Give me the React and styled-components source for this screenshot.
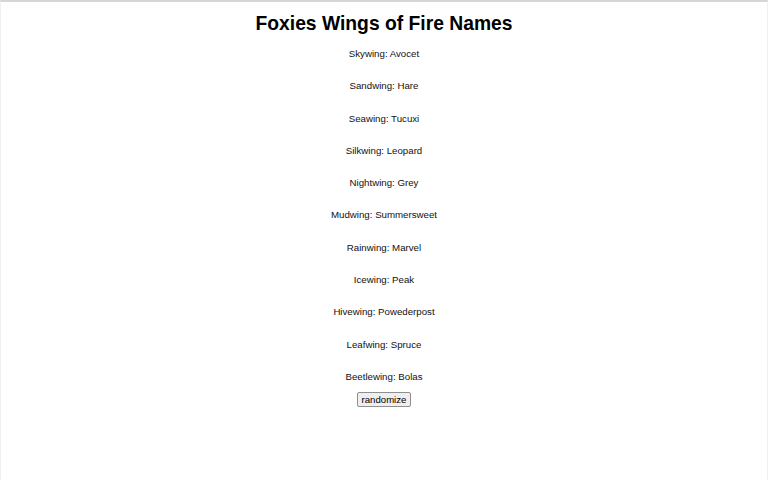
import React, { useState } from "react";
import styled, { createGlobalStyle } from "styled-components";

const GlobalStyle = createGlobalStyle`
  html, body {
    margin: 0;
    padding: 0;
    background: #ffffff;
  }
  body {
    font-family: "Liberation Sans", Arial, sans-serif;
    color: #000;
  }
`;

const Frame = styled.div`
  box-sizing: border-box;
  width: 768px;
  height: 480px;
  border-top: 2px solid #d6d6d6;
  border-left: 1px solid #f0f0f0;
  border-right: 1px solid #f0f0f0;
  display: flex;
  flex-direction: column;
  align-items: center;
`;

const Title = styled.h1`
  margin: 11px 0 0;
  font-size: 19.3px;
  line-height: 22px;
  font-weight: 700;
`;

const NameList = styled.div`
  display: flex;
  flex-direction: column;
  align-items: center;
  gap: 20.3px;
  margin-top: 13px;
`;

const NameRow = styled.p`
  margin: 0;
  font-size: 9.7px;
  line-height: 12px;
  color: #111;
`;

const RandomButton = styled.button`
  margin-top: 9px;
  font-family: "Liberation Sans", Arial, sans-serif;
  font-size: 9.6px;
  line-height: 11px;
  padding: 1px 4px;
  background: #efefef;
  border: 1px solid #8f8f8f;
  border-radius: 2px;
  color: #000;
  cursor: pointer;
`;

const tribes = [
  ["Skywing", "Avocet"],
  ["Sandwing", "Hare"],
  ["Seawing", "Tucuxi"],
  ["Silkwing", "Leopard"],
  ["Nightwing", "Grey"],
  ["Mudwing", "Summersweet"],
  ["Rainwing", "Marvel"],
  ["Icewing", "Peak"],
  ["Hivewing", "Powederpost"],
  ["Leafwing", "Spruce"],
  ["Beetlewing", "Bolas"],
];

export default function App() {
  const [names] = useState(tribes);

  return (
    <>
      <GlobalStyle />
      <Frame>
        <Title>Foxies Wings of Fire Names</Title>
        <NameList>
          {names.map(([tribe, name]) => (
            <NameRow key={tribe}>
              {tribe}: {name}
            </NameRow>
          ))}
        </NameList>
        <RandomButton>randomize</RandomButton>
      </Frame>
    </>
  );
}
